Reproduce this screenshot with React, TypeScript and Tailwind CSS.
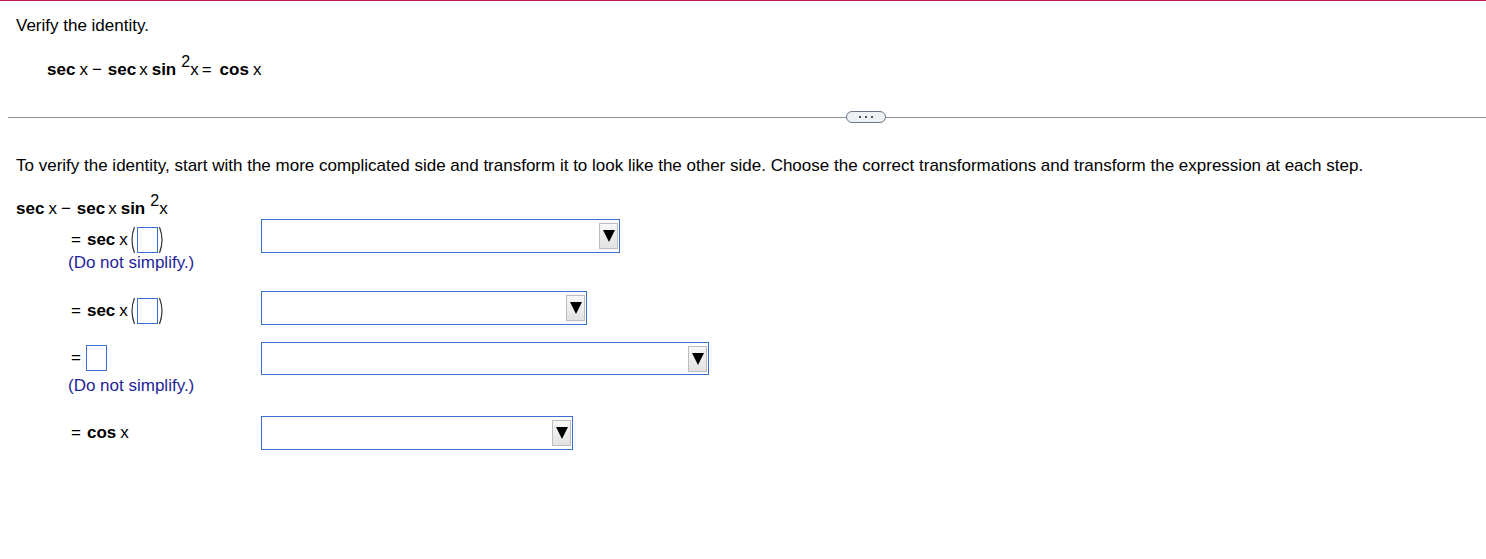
import React from "react";

const Paren = ({ right = false }: { right?: boolean }) => (
  <svg width="7" height="28" viewBox="0 0 7 28" className="block">
    <path
      d={right ? "M1.5 1 Q6.5 14 1.5 27" : "M5.5 1 Q0.5 14 5.5 27"}
      stroke="#333"
      strokeWidth="1.2"
      fill="none"
    />
  </svg>
);

const Box = () => (
  <span className="block w-[21px] h-[26px] border border-[#3a6fd3] bg-white" />
);

const Dropdown = ({ w, h = 34 }: { w: number; h?: number }) => (
  <div
    className="flex items-center justify-end pr-[1px] border border-[#3a6fd0] bg-white"
    style={{ width: w, height: h }}
  >
    <div className="flex items-center justify-center w-[19px] h-[26px] border border-[#bdbdbd] bg-gradient-to-b from-[#f7f7f7] to-[#e2e2e2]">
      <svg width="12" height="12" viewBox="0 0 12 12">
        <polygon points="0,0 12,0 6,12" fill="#000" />
      </svg>
    </div>
  </div>
);

const Note = ({ className = "" }: { className?: string }) => (
  <div className={"leading-[20px] text-[#1f1f99] " + className}>(Do not simplify.)</div>
);

export default function App() {
  return (
    <div
      className="w-full min-h-[559px] bg-white text-black text-[17px] border-t border-[#c4145a]"
      style={{ fontFamily: '"Liberation Sans", Arial, sans-serif' }}
    >
      <div className="px-4">
        <div className="mt-[15px] leading-[20px]">Verify the identity.</div>
        <div className="mt-[24px] pl-[31px] leading-[20px] flex items-baseline">
          <b>sec</b>
          <span className="ml-[4px]">x</span>
          <span className="ml-[4px]">−</span>
          <b className="ml-[6px]">sec</b>
          <span className="ml-[3px]">x</span>
          <b className="ml-[4px]">sin</b>
          <span className="relative -top-[8px] ml-[5px] text-[16px]">2</span>
          <span>x</span>
          <span className="ml-[3px]">=</span>
          <b className="ml-[8px]">cos</b>
          <span className="ml-[4px]">x</span>
        </div>
      </div>

      <div className="mt-[31px] ml-[8px] flex items-center h-[12px]">
        <div className="w-[838px] h-px bg-[#8a939c]" />
        <div className="w-[40px] h-[12px] rounded-full border border-[#6b7684] bg-[#eef1f4] flex items-center justify-center gap-[4px]">
          <span className="w-[2px] h-[2px] bg-[#4a5563]" />
          <span className="w-[2px] h-[2px] bg-[#4a5563]" />
          <span className="w-[2px] h-[2px] bg-[#4a5563]" />
        </div>
        <div className="flex-1 h-px bg-[#8a939c]" />
      </div>

      <div className="px-4">
        <div className="mt-[33px] leading-[20px]">
          To verify the identity, start with the more complicated side and transform it to look like the other side. Choose the correct transformations and transform the expression at each step.
        </div>

        <div className="mt-[23px] leading-[20px] flex items-baseline">
          <b>sec</b>
          <span className="ml-[4px]">x</span>
          <span className="ml-[4px]">−</span>
          <b className="ml-[6px]">sec</b>
          <span className="ml-[3px]">x</span>
          <b className="ml-[4px]">sin</b>
          <span className="relative -top-[8px] ml-[5px] text-[16px]">2</span>
          <span>x</span>
        </div>

        {/* Row 1 */}
        <div className="mt-[0px] flex items-start">
          <div className="w-[245px] pl-[52px]">
            <div className="mt-[8px] h-[26px] flex items-center">
              <span className="ml-[3px]">=</span>
              <b className="ml-[6px]">sec</b>
              <span className="ml-[4px]">x</span>
              <span className="ml-[1px]"><Paren /></span>
              <span className="ml-[1px]"><Box /></span>
              <Paren right />
            </div>
            <Note />
          </div>
          <Dropdown w={359} />
        </div>

        {/* Row 2 */}
        <div className="mt-[18px] flex items-start">
          <div className="w-[245px] pl-[52px]">
            <div className="mt-[7px] h-[26px] flex items-center">
              <span className="ml-[3px]">=</span>
              <b className="ml-[6px]">sec</b>
              <span className="ml-[4px]">x</span>
              <span className="ml-[1px]"><Paren /></span>
              <span className="ml-[1px]"><Box /></span>
              <Paren right />
            </div>
          </div>
          <Dropdown w={326} />
        </div>

        {/* Row 3 */}
        <div className="mt-[17px] flex items-start">
          <div className="w-[245px] pl-[52px]">
            <div className="mt-[3px] h-[26px] flex items-center">
              <span className="ml-[3px]">=</span>
              <span className="ml-[5px]"><Box /></span>
            </div>
            <Note className="mt-[5px]" />
          </div>
          <Dropdown w={448} h={33} />
        </div>

        {/* Row 4 */}
        <div className="mt-[20px] flex items-start">
          <div className="w-[245px] pl-[52px]">
            <div className="h-[34px] flex items-center">
              <span className="ml-[3px]">=</span>
              <b className="ml-[6px]">cos</b>
              <span className="ml-[4px]">x</span>
            </div>
          </div>
          <Dropdown w={312} />
        </div>
      </div>
    </div>
  );
}
